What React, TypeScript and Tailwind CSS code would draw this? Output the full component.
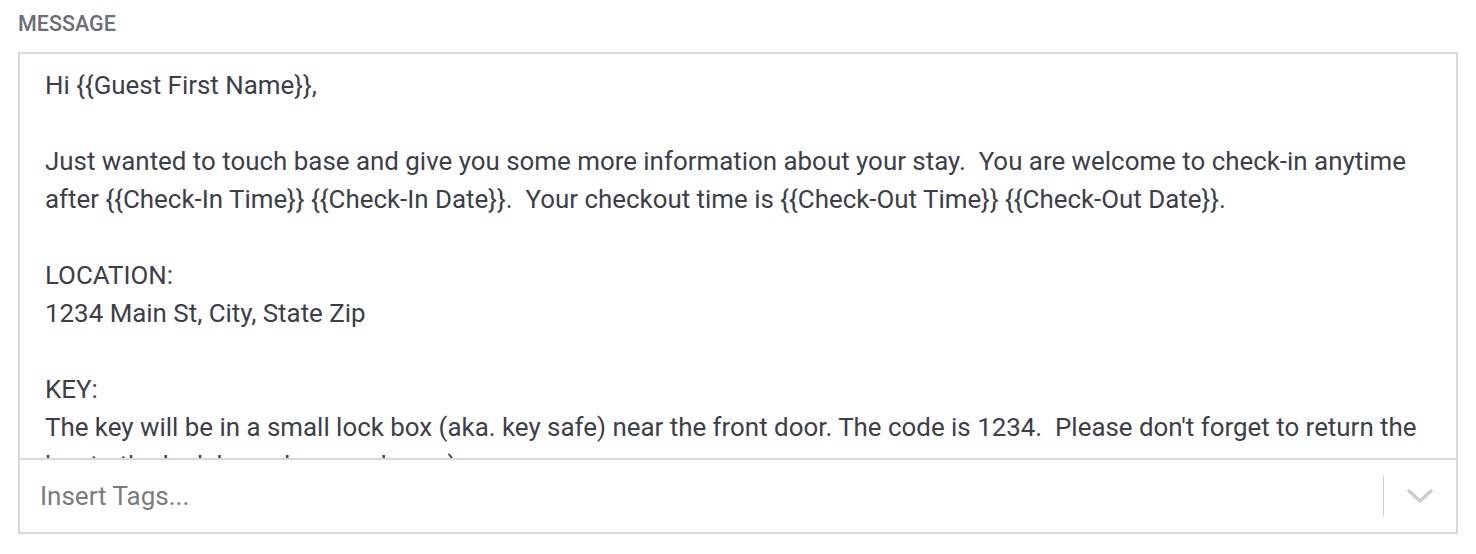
import React from 'react';

const message = `Hi {{Guest First Name}},

Just wanted to touch base and give you some more information about your stay.  You are welcome to check-in anytime after {{Check-In Time}} {{Check-In Date}}.  Your checkout time is {{Check-Out Time}} {{Check-Out Date}}.

LOCATION:
1234 Main St, City, State Zip

KEY:
The key will be in a small lock box (aka. key safe) near the front door. The code is 1234.  Please don't forget to return the key to the lock box when you leave.)`;

const App: React.FC = () => {
  return (
    <div className="bg-white w-[1476px] h-[554px] pl-[18px] pr-[18px] pt-[12px]" style={{ fontFamily: 'Roboto, "Liberation Sans", sans-serif' }}>
      <div className="text-[21.5px] font-medium text-[#6b6e78] leading-[24px]">MESSAGE</div>
      <div className="mt-[16px] border-2 border-[#d5d8dd] bg-white">
        <div className="h-[404px] overflow-hidden pl-[25px] pr-[20px] pt-[12px] text-[25.9px] leading-[38px] text-[#3c3f4a] whitespace-pre-wrap">
          {message}
        </div>
        <div className="h-[74px] border-t-2 border-[#d5d8dd] flex items-center">
          <div className="flex-1 pl-[20px] text-[26px] text-[#7b7b7b]">Insert Tags...</div>
          <div className="w-px h-[40px] bg-[#cccccc]" />
          <div className="w-[72px] flex items-center justify-center">
            <svg width="28" height="16" viewBox="0 0 28 16" fill="none">
              <path d="M3 3l11 10 11-10" stroke="#cccccc" strokeWidth="3.5" strokeLinecap="round" strokeLinejoin="round" />
            </svg>
          </div>
        </div>
      </div>
    </div>
  );
};

export default App;
